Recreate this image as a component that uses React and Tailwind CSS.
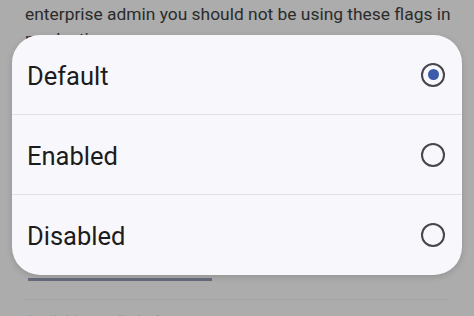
export default function App() {
  const options = [
    { label: "Default", checked: true },
    { label: "Enabled", checked: false },
    { label: "Disabled", checked: false },
  ];

  return (
    <div
      className="relative w-[474px] h-[316px] overflow-hidden bg-[#acacac]"
      style={{ fontFamily: "Roboto, 'Noto Sans', sans-serif" }}
    >
      {/* page behind the dialog */}
      <div className="pl-[25px] pr-[18px] pt-[2px]">
        <p className="text-[17.4px] leading-[25px] text-[#2b2b2b]">
          enterprise admin you should not be using these flags in production.
        </p>
        <div className="mt-[226px] ml-[3px] w-[184px] h-[3px] bg-[#676a7c]" />
        <div className="mt-[18px] h-px w-[423px] bg-[#a2a2a2]" />
        <p className="mt-[11px] text-[15px] leading-[20px] text-[#999999]">Available on all platforms</p>
      </div>

      {/* dialog */}
      <div className="absolute left-[12px] top-[35px] w-[450px] h-[240px] rounded-[28px] bg-[#f8f8fc] overflow-hidden shadow-[0_2px_6px_rgba(0,0,0,0.15)]">
        {options.map((o, i) => (
          <div
            key={o.label}
            className={
              "flex items-center justify-between h-[80px] pl-[15px] pr-[17px] " +
              (i < options.length - 1 ? "border-b border-[#e2e2e6]" : "")
            }
          >
            <span className="text-[25.5px] leading-[30px] pt-[2px] text-[#1c1c1e]">{o.label}</span>
            <span className="flex items-center justify-center w-[24px] h-[24px] rounded-full border-2 border-[#44464c]">
              {o.checked && <span className="w-[11px] h-[11px] rounded-full bg-[#3d5ba9]" />}
            </span>
          </div>
        ))}
      </div>
    </div>
  );
}
